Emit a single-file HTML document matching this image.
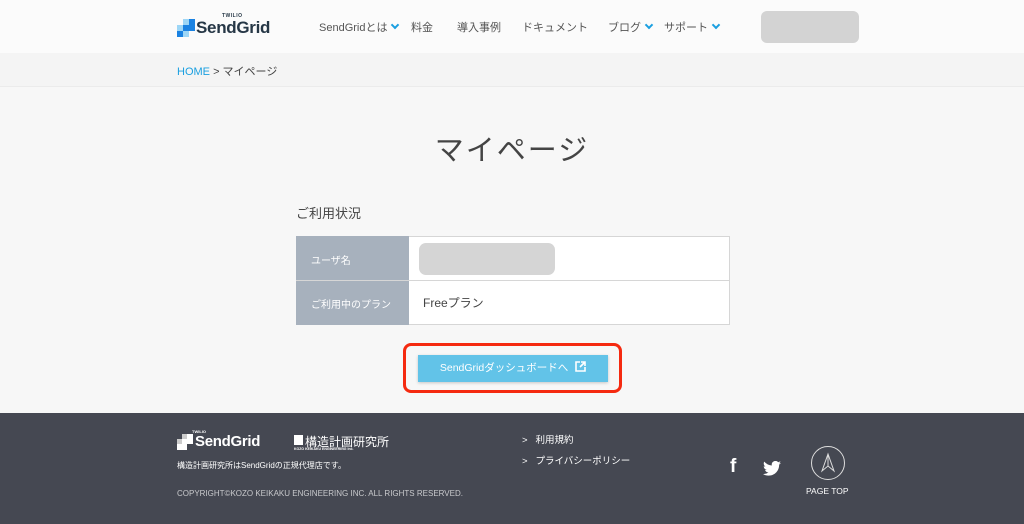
<!DOCTYPE html>
<html><head><meta charset="utf-8"><style>
*{margin:0;padding:0;box-sizing:border-box}
body{width:1024px;height:524px;overflow:hidden;background:#f7f7f7;font-family:"Liberation Sans","Noto Sans CJK JP",sans-serif;color:#444;position:relative}
.a{position:absolute;white-space:nowrap}
.w{color:#fff}
.hdr{position:absolute;left:0;top:0;width:1024px;height:53px;background:#fbfbfb;box-shadow:0 2px 6px rgba(0,0,0,.08)}
.nav{font-size:11px;color:#555;top:19px}
.chev{display:inline-block;width:6px;height:6px;border-right:2px solid #1a9fe0;border-bottom:2px solid #1a9fe0;transform:rotate(45deg);margin-left:5px;position:relative;top:-3px}
.bc{position:absolute;left:0;top:53px;width:1024px;height:34px;background:#f4f4f4;border-bottom:1px solid #ebebeb}
.foot{position:absolute;left:0;top:413px;width:1024px;height:111px;background:#454852}
</style></head><body>
<div class="hdr"></div>
<svg class="a" style="left:177px;top:19px" width="18" height="18"><rect x="6" y="0" width="6" height="6" fill="#9dd6f6"/><rect x="12" y="0" width="6" height="6" fill="#1a82e2"/><rect x="0" y="6" width="6" height="6" fill="#9dd6f6"/><rect x="6" y="6" width="6" height="6" fill="#1a82e2"/><rect x="12" y="6" width="6" height="6" fill="#1a82e2"/><rect x="0" y="12" width="6" height="6" fill="#1a82e2"/><rect x="6" y="12" width="6" height="6" fill="#9dd6f6"/></svg>
<div class="a" style="left:222px;top:13px;font-size:5px;font-weight:bold;color:#263746;letter-spacing:.5px">TWILIO</div>
<div class="a" style="left:196px;top:18px;font-size:17px;font-weight:bold;color:#263746;letter-spacing:-.3px">SendGrid</div>
<div class="a nav" style="left:319px">SendGridとは<span class="chev"></span></div>
<div class="a nav" style="left:411px">料金</div>
<div class="a nav" style="left:457px">導入事例</div>
<div class="a nav" style="left:522px">ドキュメント</div>
<div class="a nav" style="left:608px">ブログ<span class="chev"></span></div>
<div class="a nav" style="left:664px">サポート<span class="chev"></span></div>
<div class="a" style="left:761px;top:11px;width:98px;height:32px;border-radius:6px;background:#d3d3d3"></div>
<div class="bc"></div>
<div class="a" style="left:177px;top:63px;font-size:11px;color:#1a9fe0">HOME <span style="color:#444">&gt; マイページ</span></div>
<div class="a" style="left:0;width:1024px;text-align:center;top:127px;font-size:29px;color:#444;letter-spacing:2px">マイページ</div>
<div class="a" style="left:296px;top:203px;font-size:13px">ご利用状況</div>
<div class="a" style="left:296px;top:236px;width:434px;height:89px;border:1px solid #d6d6d6;background:#fff"></div>
<div class="a" style="left:296px;top:236px;width:113px;height:89px;background:#a7b1bd"></div>
<div class="a" style="left:296px;top:280px;width:434px;height:1px;background:#d6d6d6"></div>
<div class="a" style="left:311px;top:252px;font-size:10px;color:#fff">ユーザ名</div>
<div class="a" style="left:311px;top:296px;font-size:10px;color:#fff">ご利用中のプラン</div>
<div class="a" style="left:419px;top:243px;width:136px;height:32px;border-radius:7px;background:#d5d5d5"></div>
<div class="a" style="left:423px;top:294px;font-size:12px">Freeプラン</div>
<div class="a" style="left:403px;top:343px;width:219px;height:50px;border:3px solid #f52a10;border-radius:8px"></div>
<div class="a" style="left:418px;top:355px;width:190px;height:27px;background:#62c3e8;box-shadow:0 1px 3px rgba(0,0,0,.2);color:#fff;font-size:10.5px;text-align:center;line-height:27px">SendGridダッシュボードへ <svg width="11" height="11" viewBox="0 0 11 11" style="vertical-align:-1px;margin-left:4px"><path d="M5 1H1v9h9V6" fill="none" stroke="#fff" stroke-width="1.6"/><path d="M6 1h4v4M10 1L5 6" fill="none" stroke="#fff" stroke-width="1.6"/></svg></div>
<div class="foot"></div>
<svg class="a" style="left:177px;top:434px" width="16" height="16"><rect x="5" y="0" width="5" height="5" fill="#ccc"/><rect x="10" y="0" width="6" height="5" fill="#fff"/><rect x="0" y="5" width="5" height="5" fill="#ccc"/><rect x="5" y="5" width="11" height="5" fill="#fff"/><rect x="0" y="10" width="10" height="6" fill="#fff"/></svg>
<div class="a w" style="left:192px;top:429px;font-size:4px;font-weight:bold">TWILIO</div>
<div class="a w" style="left:195px;top:433px;font-size:15px;font-weight:bold;letter-spacing:-.3px">SendGrid</div>
<div class="a" style="left:294px;top:435px;width:9px;height:10px;background:#fff"></div>
<div class="a w" style="left:305px;top:433px;font-size:12px">構造計画研究所</div>
<div class="a w" style="left:294px;top:447px;font-size:3.5px;font-weight:bold">KOZO KEIKAKU ENGINEERING Inc.</div>
<div class="a w" style="left:177px;top:460px;font-size:8px">構造計画研究所はSendGridの正規代理店です。</div>
<div class="a" style="left:177px;top:489px;font-size:8px;color:#c8c9cc">COPYRIGHT©KOZO KEIKAKU ENGINEERING INC. ALL RIGHTS RESERVED.</div>
<div class="a w" style="left:522px;top:432px;font-size:9.5px">&gt;&nbsp;&nbsp; 利用規約</div>
<div class="a w" style="left:522px;top:453px;font-size:9.5px">&gt;&nbsp;&nbsp; プライバシーポリシー</div>
<div class="a w" style="left:730px;top:456px;font-size:19px;font-weight:bold">f</div>
<svg class="a" style="left:763px;top:461px" width="18" height="15" viewBox="0 0 24 20"><path fill="#fff" d="M24 2.4a10 10 0 0 1-2.8.8A5 5 0 0 0 23.3.4a10 10 0 0 1-3.1 1.2A4.9 4.9 0 0 0 11.8 6 14 14 0 0 1 1.7.9a4.9 4.9 0 0 0 1.5 6.6A4.9 4.9 0 0 1 1 6.9a4.9 4.9 0 0 0 3.9 4.8 5 5 0 0 1-2.2.1 4.9 4.9 0 0 0 4.6 3.4A9.9 9.9 0 0 1 0 17.3 14 14 0 0 0 7.5 19.5c9 0 14-7.5 14-14v-.6A10 10 0 0 0 24 2.4z"/></svg>
<svg class="a" style="left:810px;top:445px" width="36" height="36"><circle cx="18" cy="18" r="16.5" fill="none" stroke="#ddd" stroke-width="1"/><path d="M18 9 L12 26 L18 21 L24 26 Z" fill="none" stroke="#ddd" stroke-width="1"/><path d="M18 9 V21" stroke="#ddd"/></svg>
<div class="a w" style="left:806px;top:486px;font-size:8.5px">PAGE TOP</div>
</body></html>
